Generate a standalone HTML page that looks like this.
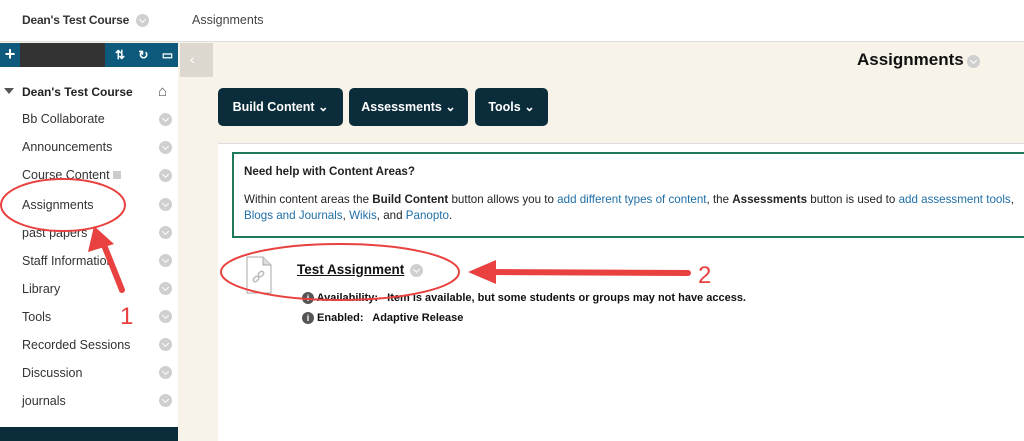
<!DOCTYPE html>
<html><head><meta charset="utf-8"><style>
*{box-sizing:border-box;margin:0;padding:0}
body{width:1024px;height:441px;overflow:hidden;background:#f7f3e9;font-family:"Liberation Sans",sans-serif;color:#222;position:relative}
.abs{position:absolute}
.top{left:0;top:0;width:1024px;height:42px;background:#fff;border-bottom:1px solid #ddd}
.side{left:0;top:43px;width:178px;height:398px;background:#fff}
.nav{position:absolute;left:22px;font-size:12.5px;color:#333}
.circ{position:absolute;left:159px;width:13px;height:13px;border-radius:50%;background:#cfcfcf}
.circ:after{content:"";position:absolute;left:4px;top:3px;width:4px;height:4px;border-right:1.5px solid #fff;border-bottom:1.5px solid #fff;transform:rotate(45deg)}
.btn{position:absolute;top:88px;height:38px;background:#0b2d3b;border-radius:5px;color:#fff;font-weight:bold;font-size:12.5px;line-height:38px;text-align:center}
a{color:#1f6fa8;text-decoration:none}
</style></head><body>
<div class="abs top"></div>
<div class="abs" style="left:22px;top:13px;font-weight:bold;font-size:12px;color:#333;letter-spacing:-0.2px">Dean's Test Course</div>
<div class="circ" style="left:136px;top:14px"></div>
<div class="abs" style="left:192px;top:13px;font-size:12.5px;color:#444">Assignments</div>

<div class="abs side"></div>
<div class="abs" style="left:0;top:43px;width:20px;height:24px;background:#0e5a7d;color:#fff;font-size:18px;font-weight:bold;text-align:center;line-height:22px">+</div>
<div class="abs" style="left:20px;top:43px;width:85px;height:24px;background:#333"></div>
<div class="abs" style="left:105px;top:43px;width:73px;height:24px;background:#0e5a7d;color:#fff;font-size:12px;font-weight:bold;line-height:24px">&nbsp;&nbsp;&nbsp;⇅&nbsp;&nbsp;&nbsp;&nbsp;↻&nbsp;&nbsp;&nbsp;&nbsp;▭</div>
<div class="abs" style="left:180px;top:43px;width:33px;height:34px;background:#dcd8cf;color:#fff;font-size:14px;line-height:32px;padding-left:10px">‹</div>

<div class="abs" style="left:4px;top:88px;width:0;height:0;border-left:5px solid transparent;border-right:5px solid transparent;border-top:6px solid #555"></div>
<div class="nav" style="top:85px;font-weight:bold;color:#222;font-size:12px">Dean's Test Course</div>
<div class="abs" style="left:158px;top:83px;font-size:15px;color:#555">⌂</div>
<div class="nav" style="top:112px">Bb Collaborate</div><div class="circ" style="top:113px"></div>
<div class="nav" style="top:140px">Announcements</div><div class="circ" style="top:141px"></div>
<div class="nav" style="top:168px">Course Content <span style="display:inline-block;width:8px;height:8px;background:#ccc"></span></div><div class="circ" style="top:169px"></div>
<div class="nav" style="top:198px">Assignments</div><div class="circ" style="top:198px"></div>
<div class="nav" style="top:226px">past papers</div><div class="circ" style="top:226px"></div>
<div class="nav" style="top:254px">Staff Information</div><div class="circ" style="top:254px"></div>
<div class="nav" style="top:282px">Library</div><div class="circ" style="top:282px"></div>
<div class="nav" style="top:310px">Tools</div><div class="circ" style="top:310px"></div>
<div class="nav" style="top:338px">Recorded Sessions</div><div class="circ" style="top:338px"></div>
<div class="nav" style="top:366px">Discussion</div><div class="circ" style="top:366px"></div>
<div class="nav" style="top:394px">journals</div><div class="circ" style="top:394px"></div>
<div class="abs" style="left:0;top:427px;width:178px;height:14px;background:#0b2d3b"></div>

<div class="abs" style="left:857px;top:50px;font-size:17px;font-weight:bold;color:#111">Assignments</div>
<div class="circ" style="left:967px;top:55px"></div>

<div class="btn" style="left:218px;width:125px">Build Content ⌄</div>
<div class="btn" style="left:349px;width:119px">Assessments ⌄</div>
<div class="btn" style="left:475px;width:73px">Tools ⌄</div>

<div class="abs" style="left:218px;top:143px;width:806px;height:298px;background:#fff;border-top:1px solid #ddd"></div>
<div class="abs" style="left:232px;top:152px;width:800px;height:86px;border:2px solid #1f7a5a;background:#fff;padding:10px 10px;font-size:11.6px;line-height:16px;color:#222;white-space:nowrap">
<b>Need help with Content Areas?</b><div style="height:12px"></div>
Within content areas the <b>Build Content</b> button allows you to <a>add different types of content</a>, the <b>Assessments</b> button is used to <a>add assessment tools</a>,<br><a>Blogs and Journals</a>, <a>Wikis</a>, and <a>Panopto</a>.
</div>

<svg class="abs" style="left:246px;top:256px" width="26" height="38" viewBox="0 0 26 38"><path d="M1 1H17L25 9V37H1Z" fill="#fff" stroke="#aaa"/><path d="M17 1V9H25" fill="#ddd" stroke="#aaa"/><g fill="none" stroke="#bbb" stroke-width="1.5"><rect x="7" y="21" width="6" height="4" rx="2" transform="rotate(-45 10 23)"/><rect x="12" y="16" width="6" height="4" rx="2" transform="rotate(-45 15 18)"/></g></svg>
<div class="abs" style="left:297px;top:262px;font-size:13.5px;font-weight:bold;text-decoration:underline;color:#111">Test Assignment</div>
<div class="circ" style="left:410px;top:264px"></div>
<div class="abs" style="left:302px;top:292px;font-size:11px;font-weight:bold;color:#111"><span style="display:inline-block;width:12px;height:12px;border-radius:50%;background:#555;color:#fff;font-size:9px;text-align:center;line-height:12px">i</span> Availability:&nbsp;&nbsp; Item is available, but some students or groups may not have access.</div>
<div class="abs" style="left:302px;top:312px;font-size:11px;font-weight:bold;color:#111"><span style="display:inline-block;width:12px;height:12px;border-radius:50%;background:#555;color:#fff;font-size:9px;text-align:center;line-height:12px">i</span> Enabled:&nbsp;&nbsp; Adaptive Release</div>

<svg class="abs" style="left:0;top:0" width="1024" height="441">
<g fill="none" stroke="#e8413f" stroke-width="2">
<ellipse cx="63" cy="205" rx="62" ry="26"/>
<ellipse cx="340" cy="272" rx="119" ry="28"/>
</g>
<line x1="122" y1="290" x2="104" y2="245" stroke="#e8413f" stroke-width="6" stroke-linecap="round"/>
<polygon points="94,226 88,252 114,244" fill="#e8413f"/>
<line x1="688" y1="273" x2="490" y2="272" stroke="#e8413f" stroke-width="6" stroke-linecap="round"/>
<polygon points="468,272 496,260 496,284" fill="#e8413f"/>
<text x="120" y="324" font-family="Liberation Sans" font-size="24" fill="#e8413f">1</text>
<text x="698" y="283" font-family="Liberation Sans" font-size="24" fill="#e8413f">2</text>
</svg>
</body></html>
